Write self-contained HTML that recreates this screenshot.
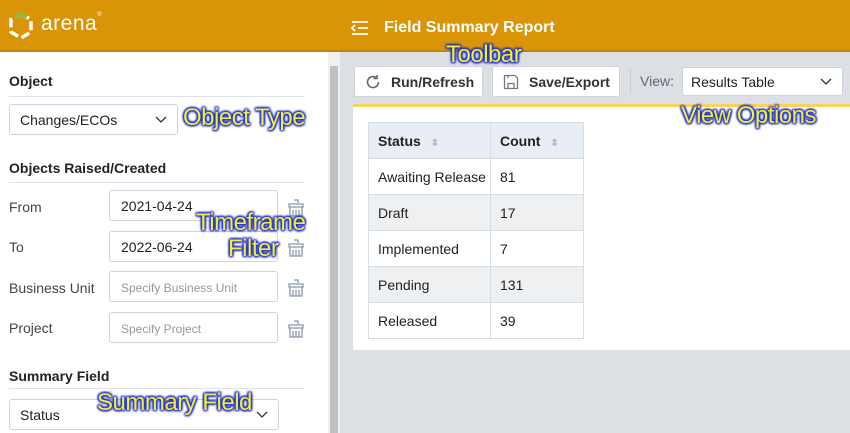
<!DOCTYPE html>
<html><head><style>
*{box-sizing:border-box;margin:0;padding:0}
body{width:850px;height:433px;overflow:hidden;font-family:"Liberation Sans",sans-serif;background:#dcdfe3;position:relative;color:#222}
.hdr{position:absolute;left:0;top:0;width:850px;height:52px;background:#d99507;border-bottom:2px solid #c1840a}
.side{position:absolute;left:0;top:52px;width:328px;height:381px;background:#fff}
.sb{position:absolute;left:328px;top:52px;width:12px;height:381px;background:#f0f0f0}
.sb div{position:absolute;left:2px;top:14px;width:8px;height:367px;background:#c1c1c1}
.lab{position:absolute;font-size:14px;font-weight:bold;color:#222}
.line{position:absolute;left:9px;width:296px;height:1px;background:#dde3ea}
.fl{position:absolute;left:9px;font-size:14px;color:#444}
.inp{position:absolute;left:109px;width:169px;height:31px;border:1px solid #cfd4da;border-radius:3px;font-size:14px;padding:7px 11px;background:#fff}
.ph{color:#999;font-size:12px;padding-top:9px}
.sel{position:absolute;border:1px solid #cfd4da;border-radius:3px;background:#fff;font-size:14px;padding:7px 10px}
.chev{position:absolute;right:10px;top:9px}
.btn{position:absolute;top:66px;height:31px;background:#fff;border:1px solid #d2d6db;border-radius:2px;font-size:14px;font-weight:bold;color:#333;padding:7px 0}
.ann{position:absolute;font-family:"Liberation Sans",sans-serif;font-size:24px;color:#f4f02a;text-shadow:0 0 2px #2233dd,0 0 2px #2233dd,1px 1px 2px #1a2ad0,-1px -1px 2px #1a2ad0,1px -1px 2px #1a2ad0,-1px 1px 2px #1a2ad0;letter-spacing:-0.5px;white-space:nowrap}
table{position:absolute;left:368px;top:122px;border-collapse:collapse;font-size:14px;table-layout:fixed;width:215px}
td{border:1px solid #d6dde5;height:36px;padding:0 9px;color:#222;white-space:nowrap;overflow:hidden}
tr:nth-child(even) td{background:#fff}
tr:nth-child(odd) td{background:#eef0f2}
tr.h td{background:#e9edf4;font-weight:bold}
.trash{position:absolute;left:288px}
</style></head><body>
<div class="hdr">
<svg style="position:absolute;left:9px;top:13px" width="24" height="26" viewBox="0 0 24 26"><path d="M12 1 L22 6.5 L22 19 L12 25 L2 19 L2 6.5 Z" fill="none" stroke="#fff" stroke-width="3.5" stroke-dasharray="9 4"/><path d="M6 4 L12 1 L18 4" stroke="#7ac143" stroke-width="3.5" fill="none"/></svg>
<div style="position:absolute;left:41px;top:12px;font-size:21px;color:#fff;letter-spacing:0.5px">arena<sup style="font-size:6px;vertical-align:top">®</sup></div>
<svg style="position:absolute;left:351px;top:20px" width="18" height="16" viewBox="0 0 18 16" stroke="#fff" stroke-width="1.8" fill="none"><path d="M1 2H17M7 8H17M1 14H17M4 5L1 8L4 11"/></svg>
<div style="position:absolute;left:384px;top:19px;font-size:16px;font-weight:bold;color:#fff">Field Summary Report</div>
</div>
<div class="side">
<div class="lab" style="left:9px;top:21px">Object</div>
<div class="line" style="top:44px"></div>
<div class="sel" style="left:9px;top:52px;width:169px;height:31px">Changes/ECOs<svg class="chev" width="12" height="10" viewBox="0 0 12 10"><path d="M1 3L6 8L11 3" stroke="#333" fill="none" stroke-width="1.3"/></svg></div>
<div class="lab" style="left:9px;top:108px">Objects Raised/Created</div>
<div class="line" style="top:130px"></div>
<div class="fl" style="top:147px">From</div>
<div class="inp" style="top:138px">2021-04-24</div>
<div class="fl" style="top:187px">To</div>
<div class="inp" style="top:179px">2022-06-24</div>
<div class="fl" style="top:228px">Business Unit</div>
<div class="inp ph" style="top:219px">Specify Business Unit</div>
<div class="fl" style="top:268px">Project</div>
<div class="inp ph" style="top:260px">Specify Project</div>
<div class="lab" style="left:9px;top:316px">Summary Field</div>
<div class="line" style="top:336px"></div>
<div class="sel" style="left:9px;top:347px;width:270px;height:31px">Status<svg class="chev" width="12" height="10" viewBox="0 0 12 10"><path d="M1 3L6 8L11 3" stroke="#333" fill="none" stroke-width="1.3"/></svg></div>
</div>
<svg class="trash" style="top:199px" width="16" height="18" viewBox="0 0 16 18" fill="none" stroke="#8898ab" stroke-width="1.3"><path d="M6 1H10V4M1 5H15V8H1ZM2 8V17H14V8M5 11V17M8 11V17M11 11V17"/></svg>
<svg class="trash" style="top:239px" width="16" height="18" viewBox="0 0 16 18" fill="none" stroke="#8898ab" stroke-width="1.3"><path d="M6 1H10V4M1 5H15V8H1ZM2 8V17H14V8M5 11V17M8 11V17M11 11V17"/></svg>
<svg class="trash" style="top:279px" width="16" height="18" viewBox="0 0 16 18" fill="none" stroke="#8898ab" stroke-width="1.3"><path d="M6 1H10V4M1 5H15V8H1ZM2 8V17H14V8M5 11V17M8 11V17M11 11V17"/></svg>
<svg class="trash" style="top:320px" width="16" height="18" viewBox="0 0 16 18" fill="none" stroke="#8898ab" stroke-width="1.3"><path d="M6 1H10V4M1 5H15V8H1ZM2 8V17H14V8M5 11V17M8 11V17M11 11V17"/></svg>
<div class="sb"><div></div></div>
<div class="btn" style="left:354px;width:129px"><svg style="position:absolute;left:10px;top:7px" width="16" height="16" viewBox="0 0 16 16" fill="none" stroke="#667" stroke-width="1.6"><path d="M13.5 8A5.5 5.5 0 1 1 11.5 3.8M12 1V4.5H8.5"/></svg><span style="position:absolute;left:36px">Run/Refresh</span></div>
<div class="btn" style="left:492px;width:128px"><svg style="position:absolute;left:10px;top:7px" width="16" height="16" viewBox="0 0 16 16" fill="none" stroke="#778" stroke-width="1.3"><path d="M1.5 1.5H12L14.5 4V14.5H1.5ZM5 14.5V9.5H11V14.5M5 1.5V4"/></svg><span style="position:absolute;left:36px">Save/Export</span></div>
<div style="position:absolute;left:630px;top:69px;width:1px;height:25px;background:#c8ccd2"></div>
<div style="position:absolute;left:640px;top:73px;font-size:14px;color:#667">View:</div>
<div class="sel" style="left:682px;top:67px;width:161px;height:29px;padding:6px 8px">Results Table<svg class="chev" style="top:8px" width="12" height="10" viewBox="0 0 12 10"><path d="M1 3L6 8L11 3" stroke="#333" fill="none" stroke-width="1.3"/></svg></div>
<div style="position:absolute;left:353px;top:104px;width:497px;height:246px;background:#fff;border-top:3px solid #fbd25a"></div>
<table>
<colgroup><col style="width:122px"><col style="width:93px"></colgroup>
<tr class="h"><td>Status <span style="color:#bbb;font-size:10px;margin-left:6px">⬍</span></td><td>Count <span style="color:#bbb;font-size:10px;margin-left:6px">⬍</span></td></tr>
<tr><td>Awaiting Release</td><td>81</td></tr>
<tr><td>Draft</td><td>17</td></tr>
<tr><td>Implemented</td><td>7</td></tr>
<tr><td>Pending</td><td>131</td></tr>
<tr><td>Released</td><td>39</td></tr>
</table>
<div class="ann" style="left:183px;top:104px">Object Type</div>
<div class="ann" style="left:446px;top:41px">Toolbar</div>
<div class="ann" style="left:681px;top:102px">View Options</div>
<div class="ann" style="left:196px;top:209px">Timeframe</div>
<div class="ann" style="left:228px;top:235px">Filter</div>
<div class="ann" style="left:97px;top:389px">Summary Field</div>
</body></html>
